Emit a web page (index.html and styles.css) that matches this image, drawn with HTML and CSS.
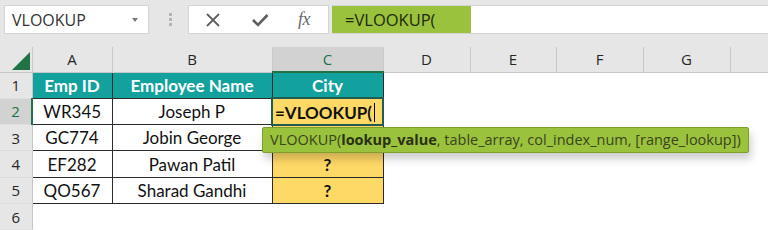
FILE: index.html
```html
<!DOCTYPE html>
<html>
<head>
<meta charset="utf-8">
<link rel="stylesheet" href="styles.css">
</head>
<body>
<div class="app">
  <div class="toolbar">
    <div class="namebox">
      <span class="name">VLOOKUP</span>
      <span class="caret"></span>
    </div>
    <div class="grip"><i></i><i></i><i></i></div>
    <div class="iconbox">
      <svg class="ico" width="18" height="18" viewBox="0 0 18 18"><path d="M3 3 L15 15 M15 3 L3 15" stroke="#5f5f5f" stroke-width="1.8" fill="none"/></svg>
      <svg class="ico" width="20" height="18" viewBox="0 0 20 18"><path d="M3 9 L8 14 L17.5 4" stroke="#5f5f5f" stroke-width="2.6" fill="none"/></svg>
      <span class="fx">fx</span>
    </div>
    <div class="formula"><span class="ftext">=VLOOKUP(</span></div>
  </div>
  <div class="gap"></div>
  <table class="sheet">
    <colgroup>
      <col class="c-rh"><col class="c-a"><col class="c-b"><col class="c-c"><col class="c-d"><col class="c-e"><col class="c-f"><col class="c-g"><col>
    </colgroup>
    <tr class="hdr">
      <th class="corner"><span class="tri"></span></th>
      <th>A</th><th>B</th><th class="sel">C</th><th>D</th><th>E</th><th>F</th><th>G</th><th class="last"></th>
    </tr>
    <tr>
      <th class="rh">1</th>
      <td class="t head">Emp ID</td><td class="t head">Employee Name</td><td class="t head">City</td>
      <td></td><td></td><td></td><td></td><td></td>
    </tr>
    <tr>
      <th class="rh rsel">2</th>
      <td class="t">WR345</td><td class="t">Joseph P</td><td class="t yel active"><span class="edit">=VLOOKUP(</span><span class="cur"></span></td>
      <td></td><td></td><td></td><td></td><td></td>
    </tr>
    <tr>
      <th class="rh">3</th>
      <td class="t">GC774</td><td class="t">Jobin George</td><td class="t yel q"></td>
      <td></td><td></td><td></td><td></td><td></td>
    </tr>
    <tr>
      <th class="rh">4</th>
      <td class="t">EF282</td><td class="t">Pawan Patil</td><td class="t yel q">?</td>
      <td></td><td></td><td></td><td></td><td></td>
    </tr>
    <tr>
      <th class="rh">5</th>
      <td class="t">QO567</td><td class="t">Sharad Gandhi</td><td class="t yel q">?</td>
      <td></td><td></td><td></td><td></td><td></td>
    </tr>
    <tr>
      <th class="rh">6</th>
      <td></td><td></td><td></td><td></td><td></td><td></td><td></td><td></td>
    </tr>
  </table>
  <div class="tip">VLOOKUP(<b>lookup_value</b>, table_array, col_index_num, [range_lookup])</div>
</div>
</body>
</html>
```
FILE: styles.css
```css
html, body {
  margin: 0;
  padding: 0;
}
body {
  width: 768px;
  height: 230px;
  overflow: hidden;
  background: #e6e6e6;
  font-family: "Open Sans", "Noto Sans", sans-serif;
}
.app {
  position: relative;
  width: 768px;
  height: 230px;
}
.toolbar {
  display: flex;
  align-items: stretch;
  height: 29px;
  padding-top: 5px;
  padding-left: 4px;
}
.namebox {
  width: 145px;
  background: #fff;
  border: 1px solid #d4d4d4;
  display: flex;
  align-items: center;
  justify-content: space-between;
  padding: 0 10px 0 7px;
  box-sizing: border-box;
}
.name {
  font-size: 16px;
  color: #333;
}
.caret {
  width: 0;
  height: 0;
  border-left: 3.5px solid transparent;
  border-right: 3.5px solid transparent;
  border-top: 4px solid #7a7a7a;
  margin-top: 1px;
}
.grip {
  width: 39px;
  display: flex;
  flex-direction: column;
  align-items: center;
  justify-content: center;
  gap: 2px;
  padding-left: 3px;
  box-sizing: border-box;
}
.grip i {
  width: 3px;
  height: 3px;
  background: #b4b4b4;
  display: block;
}
.iconbox {
  width: 141px;
  background: #fff;
  border: 1px solid #d4d4d4;
  box-sizing: border-box;
  display: flex;
  align-items: center;
  gap: 28px;
  padding-left: 15px;
}
.ico {
  display: block;
}
.fx {
  font-family: "Liberation Serif", "DejaVu Serif", serif;
  font-style: italic;
  font-size: 18px;
  color: #6a6a6a;
  letter-spacing: -0.5px;
}
.formula {
  flex: 1;
  margin-left: 3px;
  background: #fff;
  border-top: 1px solid #d4d4d4;
  border-bottom: 1px solid #d4d4d4;
  display: flex;
  align-items: stretch;
}
.ftext {
  background: #9ac23c;
  color: #1f2a10;
  font-size: 16.5px;
  width: 139px;
  box-sizing: border-box;
  padding-left: 13px;
  display: flex;
  align-items: center;
}
.gap {
  height: 13px;
}
.sheet {
  border-collapse: collapse;
  table-layout: fixed;
  width: 768px;
  font-family: "Lato", "Open Sans", sans-serif;
}
.c-rh { width: 32px; }
.c-a { width: 80px; }
.c-b { width: 160px; }
.c-c { width: 111px; }
.c-d { width: 87px; }
.c-e { width: 86px; }
.c-f { width: 87px; }
.c-g { width: 87px; }
.sheet th, .sheet td {
  padding: 0;
  overflow: hidden;
  white-space: nowrap;
}
.hdr th {
  height: 24px;
  background: #e6e6e6;
  font-family: "Open Sans", "Noto Sans", sans-serif;
  font-weight: normal;
  font-size: 15px;
  color: #262626;
  border-right: 1px solid #c9c9c9;
  border-bottom: 1px solid #c6c6c6;
  text-align: center;
}
.hdr th.last {
  border-right: none;
}
.hdr th.sel {
  background: #d2d2d2;
  color: #217346;
  border-bottom: 2px solid #217346;
}
.corner {
  position: relative;
}
.tri {
  position: absolute;
  right: 2px;
  bottom: 2px;
  width: 0;
  height: 0;
  border-left: 18px solid transparent;
  border-bottom: 18px solid #217346;
}
.rh {
  height: 25.3px;
  background: #e6e6e6;
  font-family: "Open Sans", "Noto Sans", sans-serif;
  font-weight: normal;
  font-size: 15px;
  color: #262626;
  text-align: center;
  border-right: 1px solid #c6c6c6;
  border-bottom: 1px solid #dedede;
}
.rh.rsel {
  background: #d2d2d2;
  color: #217346;
  border-right: 2px solid #217346;
}
.sheet td {
  background: #fff;
}
.t {
  border: 1px solid #2b2b2b;
  text-align: center;
  font-size: 17px;
  color: #111;
}
.t.head {
  background: #12a19d;
  color: #fff;
  font-weight: bold;
}
.t.yel {
  background: #ffd966;
}
.t.q {
  font-weight: bold;
}
.t.active {
  border: 2px solid #1f5c52;
  text-align: left;
  font-weight: bold;
  padding-left: 2px;
}
.edit {
  vertical-align: middle;
}
.cur {
  display: inline-block;
  width: 1px;
  height: 19px;
  background: #000;
  vertical-align: middle;
  margin-left: 2px;
}
.tip {
  position: absolute;
  left: 262px;
  top: 127px;
  width: 487px;
  height: 26px;
  box-sizing: border-box;
  background: #9ac23c;
  border: 1px solid #7e9f2c;
  border-radius: 2px;
  box-shadow: 2px 6px 9px rgba(0, 0, 0, 0.2);
  color: #3b4420;
  font-family: "Open Sans", "Noto Sans", sans-serif;
  font-size: 14.5px;
  line-height: 24px;
  padding-left: 7px;
  white-space: nowrap;
}
.tip b {
  color: #2a3015;
}
```
